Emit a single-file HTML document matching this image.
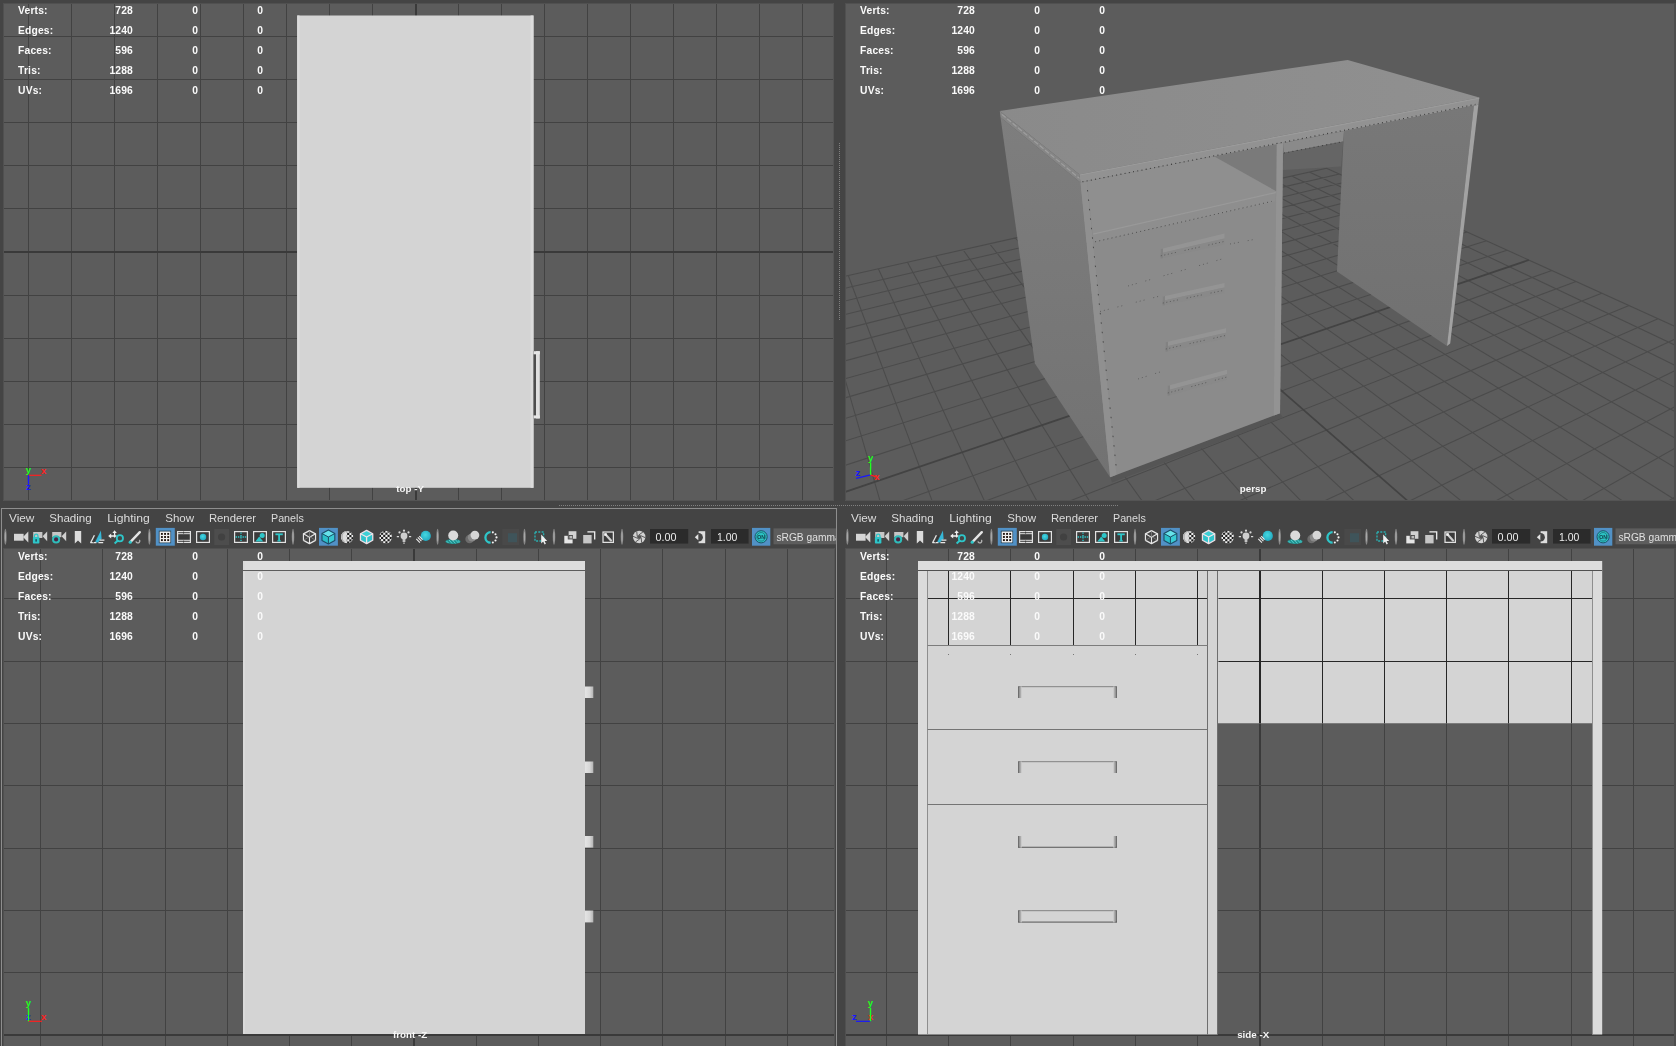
<!DOCTYPE html>
<html><head><meta charset="utf-8"><title>Maya four view</title>
<style>
html,body{margin:0;padding:0;background:#444444;}
body{width:1676px;height:1046px;overflow:hidden;position:relative;font-family:"Liberation Sans",sans-serif;}
svg{position:absolute;left:0;top:0;display:block;}
.hud{opacity:0.999;}
.hud text{font-family:"Liberation Sans",sans-serif;font-weight:bold;font-size:10.3px;letter-spacing:0.15px;fill:#fafafa;}
text.lab{font-family:"Liberation Sans",sans-serif;font-weight:bold;font-size:9.8px;fill:#f6f6f6;text-anchor:middle;opacity:0.999;}
text.menu{font-family:"Liberation Sans",sans-serif;font-size:11.6px;fill:#dcdcdc;}
text.fld{font-family:"Liberation Sans",sans-serif;font-size:11.6px;fill:#ececec;}
</style>
</head>
<body>
<svg width="1676" height="1046" viewBox="0 0 1676 1046">
<defs>
<clipPath id="cTL"><rect x="3" y="3" width="831" height="498"/></clipPath>
<clipPath id="cTR"><rect x="845" y="3" width="831" height="498"/></clipPath>
<clipPath id="cBL"><rect x="3" y="548" width="832" height="498"/></clipPath>
<clipPath id="cBR"><rect x="845" y="548" width="831" height="498"/></clipPath>
<clipPath id="cTBL"><rect x="2" y="509" width="834" height="39"/></clipPath>
<clipPath id="cTBR"><rect x="845" y="509" width="831" height="39"/></clipPath>
<clipPath id="ckAL"><circle cx="347.2" cy="537.1" r="6.2"/></clipPath>
<clipPath id="ckBL"><circle cx="385.6" cy="537.1" r="6.4"/></clipPath>
<clipPath id="ckAR"><circle cx="347.2" cy="537.1" r="6.2"/></clipPath>
<clipPath id="ckBR"><circle cx="385.6" cy="537.1" r="6.4"/></clipPath>
<linearGradient id="gHandle" x1="0" x2="1" y1="0" y2="0"><stop offset="0" stop-color="#e4e4e4"/><stop offset="0.55" stop-color="#d8d8d8"/><stop offset="1" stop-color="#b4b4b4"/></linearGradient>
<linearGradient id="gLegL" x1="0" x2="1" y1="0" y2="0"><stop offset="0" stop-color="#8c8c8c"/><stop offset="1" stop-color="#d0d0d0"/></linearGradient>
<linearGradient id="gLegR" x1="0" x2="1" y1="0" y2="0"><stop offset="0" stop-color="#d0d0d0"/><stop offset="1" stop-color="#8c8c8c"/></linearGradient>
<linearGradient id="gLside" x1="0" x2="0" y1="0" y2="1"><stop offset="0" stop-color="#7e7e7e"/><stop offset="1" stop-color="#727272"/></linearGradient>
<linearGradient id="gRleg" x1="0" x2="0" y1="0" y2="1"><stop offset="0" stop-color="#787878"/><stop offset="1" stop-color="#717171"/></linearGradient>
<linearGradient id="gTop" x1="0" x2="1" y1="0" y2="0"><stop offset="0" stop-color="#8a8a8a"/><stop offset="1" stop-color="#909090"/></linearGradient>
<radialGradient id="gCyL" cx="0.45" cy="0.4" r="0.6"><stop offset="0" stop-color="#45d8e0"/><stop offset="1" stop-color="#22a8c0"/></radialGradient>
<radialGradient id="gCyR" cx="0.45" cy="0.4" r="0.6"><stop offset="0" stop-color="#45d8e0"/><stop offset="1" stop-color="#22a8c0"/></radialGradient>
<linearGradient id="gEdgeL" x1="0" x2="1" y1="0" y2="0"><stop offset="0" stop-color="#444" stop-opacity="1"/><stop offset="1" stop-color="#444" stop-opacity="0"/></linearGradient>
<linearGradient id="gEdgeT" x1="0" x2="0" y1="0" y2="1"><stop offset="0" stop-color="#444" stop-opacity="1"/><stop offset="1" stop-color="#444" stop-opacity="0"/></linearGradient>
</defs>
<rect x="0" y="0" width="1676" height="1046" fill="#444444" />
<g clip-path="url(#cTL)"><rect x="3" y="3" width="831" height="498" fill="#5c5c5c" /><rect x="28" y="3" width="1" height="498" fill="#424242" /><rect x="71" y="3" width="1" height="498" fill="#424242" /><rect x="114" y="3" width="1" height="498" fill="#424242" /><rect x="157" y="3" width="1" height="498" fill="#424242" /><rect x="200" y="3" width="1" height="498" fill="#424242" /><rect x="243" y="3" width="1" height="498" fill="#424242" /><rect x="286" y="3" width="1" height="498" fill="#424242" /><rect x="329" y="3" width="1" height="498" fill="#424242" /><rect x="372" y="3" width="1" height="498" fill="#424242" /><rect x="415" y="3" width="2" height="498" fill="#3a3a3a" /><rect x="458" y="3" width="1" height="498" fill="#424242" /><rect x="501" y="3" width="1" height="498" fill="#424242" /><rect x="544" y="3" width="1" height="498" fill="#424242" /><rect x="587" y="3" width="1" height="498" fill="#424242" /><rect x="630" y="3" width="1" height="498" fill="#424242" /><rect x="673" y="3" width="1" height="498" fill="#424242" /><rect x="716" y="3" width="1" height="498" fill="#424242" /><rect x="759" y="3" width="1" height="498" fill="#424242" /><rect x="802" y="3" width="1" height="498" fill="#424242" /><rect x="3" y="36" width="831" height="1" fill="#424242" /><rect x="3" y="79" width="831" height="1" fill="#424242" /><rect x="3" y="122" width="831" height="1" fill="#424242" /><rect x="3" y="165" width="831" height="1" fill="#424242" /><rect x="3" y="208" width="831" height="1" fill="#424242" /><rect x="3" y="251" width="831" height="2" fill="#3a3a3a" /><rect x="3" y="295" width="831" height="1" fill="#424242" /><rect x="3" y="338" width="831" height="1" fill="#424242" /><rect x="3" y="381" width="831" height="1" fill="#424242" /><rect x="3" y="424" width="831" height="1" fill="#424242" /><rect x="3" y="467" width="831" height="1" fill="#424242" /><rect x="297.2" y="15.5" width="236.3" height="472.3" fill="#d4d4d4" /><rect x="297.2" y="15.5" width="2.3" height="472.3" fill="#dbdbdb" /><rect x="530.6" y="15.5" width="2.9" height="472.3" fill="#dcdcdc" /><rect x="533.5" y="351.2" width="2.7" height="67.2" fill="#4e4e4e" /><rect x="536" y="351.2" width="3.8" height="67.2" fill="#e0e0e0" /><rect x="533.5" y="351.2" width="6.3" height="3.1" fill="#e6e6e6" /><rect x="533.5" y="415.4" width="6.3" height="3" fill="#e6e6e6" /><g font-family='"Liberation Sans", sans-serif' font-weight="bold" font-size="9.5px"><path d="M28.5 475.3 h13" stroke="#ff2020" stroke-width="1.2"/><path d="M28.5 475.3 v9" stroke="#1818ff" stroke-width="1.4"/><text x="41" y="473.5" fill="#ff2020">x</text><text x="25.7" y="473.1" fill="#20ff20">y</text><text x="26" y="489.6" fill="#1818ff">z</text></g></g>
<g clip-path="url(#cTR)"><rect x="845" y="3" width="831" height="498" fill="#5c5c5c" /><path d="M751.92 297.14L861.43 1219.64M751.92 297.14L1326.53 168.15M785.13 289.69L959.31 1147.95M753.37 309.36L1339.53 174.05M817.23 282.48L1047.42 1083.42M754.91 322.33L1353.08 180.21M848.29 275.51L1127.16 1025.01M756.55 336.12L1367.22 186.63M878.36 268.76L1199.67 971.91M758.29 350.8L1381.98 193.33M907.48 262.22L1265.89 923.41M760.15 366.47L1397.42 200.34M935.69 255.89L1326.6 878.94M762.14 383.24L1413.58 207.68M963.05 249.75L1382.46 838.03M764.28 401.21L1430.51 215.37M989.58 243.79L1434.04 800.25M766.57 420.53L1448.26 223.43M1015.32 238.01L1481.8 765.27M769.04 441.35L1466.9 231.9M1040.31 232.4L1526.15 732.79M771.71 463.85L1486.5 240.8M1064.58 226.96L1567.46 702.53M774.61 488.25L1507.13 250.16M1111.09 216.52L1642.08 647.88M781.2 543.79L1551.83 270.46M1133.38 211.51L1675.9 623.11M784.98 575.58L1576.09 281.48M1155.06 206.65L1707.67 599.84M789.13 610.6L1601.79 293.15M1176.16 201.91L1737.58 577.93M793.73 649.35L1629.04 305.53M1196.7 197.3L1765.78 557.28M798.85 692.48L1658 318.68M1216.7 192.81L1792.41 537.77M804.58 740.77L1688.83 332.68M1236.19 188.43L1817.61 519.32M811.05 795.2L1721.71 347.61M1255.18 184.17L1841.49 501.83M818.38 857.03L1756.87 363.57M1273.69 180.01L1864.14 485.24M826.79 927.86L1794.53 380.68M1291.74 175.96L1885.66 469.48M836.52 1009.83L1834.99 399.05M1309.35 172.01L1906.13 454.49M847.91 1105.79L1878.56 418.84M1326.53 168.15L1925.62 440.21M861.43 1219.64L1925.62 440.21" stroke="#4b4b4b" stroke-width="1.05" fill="none"/><path d="M1088.16 221.66L1606.01 674.3M777.76 514.8L1528.87 260.04" stroke="#434343" stroke-width="1.7" fill="none"/><polygon points="1344,131 1473.9,105.68 1447,345.9 1337,271.6" fill="url(#gRleg)" /><polygon points="1473.9,105.68 1478.4,104.8 1450.2,343.4 1447,345.9" fill="#a2a2a2" /><polygon points="1283,142.9 1344,131 1343.2,141.5 1283.5,153" fill="#8a8a8a" /><polygon points="1283.5,153 1343.2,141.5 1341,166.5 1283,170" fill="#656565" /><polygon points="1110.1,477.2 1280,413.2 1283,417.5 1112,482.5" fill="#555555" /><polygon points="1000.5,117.2 1080.4,182.4 1110.1,477.2 1034.9,363.5" fill="url(#gLside)" /><polygon points="1080.4,182.4 1283,142.9 1280,413.2 1110.1,477.2" fill="#8b8b8b" /><polygon points="1086.8,181.15 1214,156.35 1276.8,191.5 1275.7,193 1093.1,234.6" fill="#8f8f8f" /><polygon points="1214,156.35 1276.8,144.11 1276.8,191.5" fill="#7a7a7a" /><polygon points="1276.8,144.11 1283,142.9 1280,413.2 1273.8,415.6" fill="#939393" /><polygon points="1080.4,182.4 1086.8,181.15 1116.4,474.8 1110.1,477.2" fill="#909090" /><polygon points="1093.1,234.6 1275.7,193 1275.2,201.6 1093.9,242" fill="#8e8e8e" /><path d="M1095.1 241.8L1271.7 201.4" stroke="#3a3a3a" stroke-width="1" stroke-dasharray="1 3.2" fill="none" opacity="0.75"/><path d="M1087.5 190L1116.5 470" stroke="#3a3a3a" stroke-width="1" stroke-dasharray="1.5 8" fill="none" opacity="0.8"/><path d="M1093.1 234.2L1275.7 192.6" stroke="#999999" stroke-width="1.2" fill="none"/><polygon points="1160.8,249 1224.5,233.5 1224.5,238.45 1160.8,253.28" fill="#949494" /><polygon points="1160.8,253.28 1224.5,238.45 1224.5,244.5 1160.8,258.5" fill="#898989" /><polygon points="1160.8,249 1163,248.5 1163,258 1160.8,258.5" fill="#828282" /><path d="M1160.8 255.84L1224.5 241.42" stroke="#333" stroke-width="1" stroke-dasharray="1 2.6 1 2.6 1 2.6 1 2.6 1 9" fill="none" opacity="0.55"/><polygon points="1162.8,296.6 1224.5,283 1224.5,287.5 1162.8,300.65" fill="#949494" /><polygon points="1162.8,300.65 1224.5,287.5 1224.5,293 1162.8,305.6" fill="#898989" /><polygon points="1162.8,296.6 1165,296.1 1165,305.1 1162.8,305.6" fill="#828282" /><path d="M1162.8 303.08L1224.5 290.2" stroke="#333" stroke-width="1" stroke-dasharray="1 2.6 1 2.6 1 2.6 1 2.6 1 9" fill="none" opacity="0.55"/><polygon points="1165.8,342.2 1226,328.2 1226,332.7 1165.8,346.47" fill="#949494" /><polygon points="1165.8,346.47 1226,332.7 1226,338.2 1165.8,351.7" fill="#898989" /><polygon points="1165.8,342.2 1168,341.7 1168,351.2 1165.8,351.7" fill="#828282" /><path d="M1165.8 349.04L1226 335.4" stroke="#333" stroke-width="1" stroke-dasharray="1 2.6 1 2.6 1 2.6 1 2.6 1 9" fill="none" opacity="0.55"/><polygon points="1167.8,385.8 1227,369.7 1227,374.25 1167.8,390.3" fill="#949494" /><polygon points="1167.8,390.3 1227,374.25 1227,379.8 1167.8,395.8" fill="#898989" /><polygon points="1167.8,385.8 1170,385.3 1170,395.3 1167.8,395.8" fill="#828282" /><path d="M1167.8 393L1227 376.97" stroke="#333" stroke-width="1" stroke-dasharray="1 2.6 1 2.6 1 2.6 1 2.6 1 9" fill="none" opacity="0.55"/><path d="M1128 286L1222 259" stroke="#3a3a3a" stroke-width="1" stroke-dasharray="1 3 1 3 1 9 1 3 1 14" fill="none" opacity="0.55"/><path d="M1100 311.5L1160 296" stroke="#3a3a3a" stroke-width="1" stroke-dasharray="1 3 1 3 1 9 1 3 1 14" fill="none" opacity="0.55"/><path d="M1138 379L1160 372" stroke="#3a3a3a" stroke-width="1" stroke-dasharray="1 3 1 3 1 9 1 3 1 14" fill="none" opacity="0.55"/><path d="M1230 244L1262 238" stroke="#3a3a3a" stroke-width="1" stroke-dasharray="1 3 1 3 1 9 1 3 1 14" fill="none" opacity="0.55"/><polygon points="999.8,110.9 1347.7,60 1479.3,97.6 1079.5,174.4" fill="url(#gTop)" /><polygon points="1079.5,174.4 1479.3,97.6 1478.4,104.8 1080.4,182.4" fill="#929292" /><polygon points="999.8,110.9 1079.5,174.4 1080.4,182.4 1000.5,117.2" fill="#868686" /><path d="M1082.4 181.8L1475.4 104.4" stroke="#2c2c2c" stroke-width="1.1" stroke-dasharray="1 3.3" fill="none" opacity="0.85"/><path d="M1284 153L1343 141.6" stroke="#2c2c2c" stroke-width="1.1" stroke-dasharray="1 3.3" fill="none" opacity="0.7"/><path d="M1001.8 114.4L1079.5 178.4" stroke="#a4a4a4" stroke-width="1.2" stroke-dasharray="5 2" fill="none" opacity="0.8"/><path d="M1079.5 175L1479.3 98.2" stroke="#9d9d9d" stroke-width="1.2" fill="none" opacity="0.8"/><g font-family='"Liberation Sans", sans-serif' font-weight="bold" font-size="9.5px"><path d="M870.6 474.9 l-14.5 3.5" stroke="#1818ff" stroke-width="1.3"/><path d="M870.6 474.9 l6 2.2" stroke="#ff2020" stroke-width="1.3"/><path d="M870.6 474.9 v-12.2" stroke="#20ff20" stroke-width="1.4"/><text x="874.2" y="479.7" fill="#ff2020">x</text><text x="855.6" y="476.3" fill="#1818ff">z</text><text x="867.9" y="461.3" fill="#20ff20">y</text></g></g>
<g clip-path="url(#cBL)"><rect x="3" y="548" width="832" height="498" fill="#5c5c5c" /><rect x="40" y="548" width="1" height="498" fill="#424242" /><rect x="102" y="548" width="1" height="498" fill="#424242" /><rect x="165" y="548" width="1" height="498" fill="#424242" /><rect x="227" y="548" width="1" height="498" fill="#424242" /><rect x="289" y="548" width="1" height="498" fill="#424242" /><rect x="351" y="548" width="1" height="498" fill="#424242" /><rect x="413" y="548" width="2" height="498" fill="#3a3a3a" /><rect x="476" y="548" width="1" height="498" fill="#424242" /><rect x="538" y="548" width="1" height="498" fill="#424242" /><rect x="600" y="548" width="1" height="498" fill="#424242" /><rect x="662" y="548" width="1" height="498" fill="#424242" /><rect x="725" y="548" width="1" height="498" fill="#424242" /><rect x="787" y="548" width="1" height="498" fill="#424242" /><rect x="3" y="598" width="832" height="1" fill="#424242" /><rect x="3" y="661" width="832" height="1" fill="#424242" /><rect x="3" y="723" width="832" height="1" fill="#424242" /><rect x="3" y="785" width="832" height="1" fill="#424242" /><rect x="3" y="848" width="832" height="1" fill="#424242" /><rect x="3" y="910" width="832" height="1" fill="#424242" /><rect x="3" y="972" width="832" height="1" fill="#424242" /><rect x="3" y="1034" width="832" height="2" fill="#3a3a3a" /><rect x="243" y="561" width="342" height="473" fill="#d4d4d4" /><rect x="243" y="561" width="342" height="9" fill="#dddddd" /><rect x="243" y="561" width="2" height="473" fill="#dadada" /><rect x="243" y="570" width="342" height="1" fill="#5c5c5c" /><rect x="585" y="686.5" width="8.3" height="11.5" fill="url(#gHandle)" /><rect x="585" y="761.5" width="8.3" height="11.5" fill="url(#gHandle)" /><rect x="585" y="836" width="8.3" height="11.6" fill="url(#gHandle)" /><rect x="585" y="910.5" width="8.3" height="11.9" fill="url(#gHandle)" /><g font-family='"Liberation Sans", sans-serif' font-weight="bold" font-size="9.5px"><text x="25.9" y="1020.3" fill="#1818ff">z</text><path d="M28.5 1021.3 h13.5" stroke="#ff2020" stroke-width="1.2"/><path d="M28.5 1021.3 v-13.5" stroke="#20ff20" stroke-width="1.4"/><text x="41" y="1020.1" fill="#ff2020">x</text><text x="25.7" y="1006" fill="#20ff20">y</text></g></g>
<g clip-path="url(#cBR)"><rect x="845" y="548" width="831" height="498" fill="#5c5c5c" /><rect x="886" y="548" width="1" height="498" fill="#424242" /><rect x="948" y="548" width="1" height="498" fill="#424242" /><rect x="1010" y="548" width="1" height="498" fill="#424242" /><rect x="1073" y="548" width="1" height="498" fill="#424242" /><rect x="1135" y="548" width="1" height="498" fill="#424242" /><rect x="1197" y="548" width="1" height="498" fill="#424242" /><rect x="1259" y="548" width="2" height="498" fill="#3a3a3a" /><rect x="1322" y="548" width="1" height="498" fill="#424242" /><rect x="1384" y="548" width="1" height="498" fill="#424242" /><rect x="1446" y="548" width="1" height="498" fill="#424242" /><rect x="1508" y="548" width="1" height="498" fill="#424242" /><rect x="1571" y="548" width="1" height="498" fill="#424242" /><rect x="1633" y="548" width="1" height="498" fill="#424242" /><rect x="845" y="598" width="831" height="1" fill="#424242" /><rect x="845" y="661" width="831" height="1" fill="#424242" /><rect x="845" y="723" width="831" height="1" fill="#424242" /><rect x="845" y="785" width="831" height="1" fill="#424242" /><rect x="845" y="848" width="831" height="1" fill="#424242" /><rect x="845" y="910" width="831" height="1" fill="#424242" /><rect x="845" y="972" width="831" height="1" fill="#424242" /><rect x="845" y="1034" width="831" height="2" fill="#3a3a3a" /><rect x="918" y="561" width="684.2" height="9.4" fill="#dddddd" /><rect x="918" y="570" width="9.6" height="464.5" fill="#dbdbdb" /><rect x="1592.3" y="570" width="9.9" height="464.5" fill="#dbdbdb" /><rect x="927.6" y="570" width="290" height="464.5" fill="#d4d4d4" /><rect x="1217.6" y="570" width="374.7" height="153.4" fill="#d4d4d4" /><rect x="948" y="571" width="1" height="74.5" fill="#262626" /><rect x="1010" y="571" width="1" height="74.5" fill="#262626" /><rect x="1073" y="571" width="1" height="74.5" fill="#262626" /><rect x="1135" y="571" width="1" height="74.5" fill="#262626" /><rect x="1197" y="571" width="1" height="74.5" fill="#262626" /><rect x="1259" y="571" width="2" height="152.4" fill="#262626" /><rect x="1322" y="571" width="1" height="152.4" fill="#262626" /><rect x="1384" y="571" width="1" height="152.4" fill="#262626" /><rect x="1446" y="571" width="1" height="152.4" fill="#262626" /><rect x="1508" y="571" width="1" height="152.4" fill="#262626" /><rect x="1571" y="571" width="1" height="152.4" fill="#262626" /><rect x="927.6" y="598" width="279.9" height="1" fill="#262626" /><rect x="1218.4" y="598" width="373.9" height="1" fill="#262626" /><rect x="1218.4" y="661" width="373.9" height="1" fill="#262626" /><rect x="918" y="570" width="684.2" height="1" fill="#505050" /><rect x="927" y="571" width="1" height="463.5" fill="#8e8e8e" /><rect x="1592" y="571" width="1" height="463.5" fill="#8e8e8e" /><rect x="1207" y="571" width="1" height="463.5" fill="#6e6e6e" /><rect x="1217" y="571" width="1" height="463.5" fill="#6e6e6e" /><rect x="927.6" y="645" width="279.9" height="1" fill="#7c7c7c" /><rect x="927.6" y="729" width="279.9" height="1" fill="#747474" /><rect x="927.6" y="804" width="279.9" height="1" fill="#747474" /><rect x="948" y="654" width="1" height="1" fill="#777777" /><rect x="1010" y="654" width="1" height="1" fill="#777777" /><rect x="1073" y="654" width="1" height="1" fill="#777777" /><rect x="1135" y="654" width="1" height="1" fill="#777777" /><rect x="1197" y="654" width="1" height="1" fill="#777777" /><rect x="1018.2" y="686.1" width="98.6" height="1.1" fill="#8a8a8a" /><rect x="1018.2" y="686.5" width="1.2" height="11.5" fill="#555555" /><rect x="1019.4" y="686.5" width="2.4" height="11.5" fill="url(#gLegL)" /><rect x="1115.6" y="686.5" width="1.2" height="11.5" fill="#555555" /><rect x="1113.2" y="686.5" width="2.4" height="11.5" fill="url(#gLegR)" /><rect x="1018.2" y="761.1" width="98.6" height="1.1" fill="#8a8a8a" /><rect x="1018.2" y="761.5" width="1.2" height="11.5" fill="#555555" /><rect x="1019.4" y="761.5" width="2.4" height="11.5" fill="url(#gLegL)" /><rect x="1115.6" y="761.5" width="1.2" height="11.5" fill="#555555" /><rect x="1113.2" y="761.5" width="2.4" height="11.5" fill="url(#gLegR)" /><rect x="1018.2" y="846.7" width="98.6" height="1.2" fill="#6a6a6a" /><rect x="1018.2" y="836" width="1.2" height="11.6" fill="#555555" /><rect x="1019.4" y="836" width="2.4" height="11.6" fill="url(#gLegL)" /><rect x="1115.6" y="836" width="1.2" height="11.6" fill="#555555" /><rect x="1113.2" y="836" width="2.4" height="11.6" fill="url(#gLegR)" /><rect x="1018.2" y="910.1" width="98.6" height="1.1" fill="#8a8a8a" /><rect x="1018.2" y="921.5" width="98.6" height="1.2" fill="#6a6a6a" /><rect x="1018.2" y="910.5" width="1.2" height="11.9" fill="#555555" /><rect x="1019.4" y="910.5" width="2.4" height="11.9" fill="url(#gLegL)" /><rect x="1115.6" y="910.5" width="1.2" height="11.9" fill="#555555" /><rect x="1113.2" y="910.5" width="2.4" height="11.9" fill="url(#gLegR)" /><g font-family='"Liberation Sans", sans-serif' font-weight="bold" font-size="9.5px"><text x="867.9" y="1020.3" fill="#ff2020">x</text><path d="M870.5 1021.3 h-14.5" stroke="#1818ff" stroke-width="1.2"/><path d="M870.5 1021.3 v-13.5" stroke="#20ff20" stroke-width="1.4"/><text x="852" y="1020.3" fill="#1818ff">z</text><text x="867.7" y="1006" fill="#20ff20">y</text></g></g>
<g style="filter:grayscale(1)">
<g class="hud"><text x="18.1" y="14.2">Verts:</text><text x="133" y="14.2" text-anchor="end">728</text><text x="198.2" y="14.2" text-anchor="end">0</text><text x="263.2" y="14.2" text-anchor="end">0</text><text x="18.1" y="34.25">Edges:</text><text x="133" y="34.25" text-anchor="end">1240</text><text x="198.2" y="34.25" text-anchor="end">0</text><text x="263.2" y="34.25" text-anchor="end">0</text><text x="18.1" y="54.3">Faces:</text><text x="133" y="54.3" text-anchor="end">596</text><text x="198.2" y="54.3" text-anchor="end">0</text><text x="263.2" y="54.3" text-anchor="end">0</text><text x="18.1" y="74.35">Tris:</text><text x="133" y="74.35" text-anchor="end">1288</text><text x="198.2" y="74.35" text-anchor="end">0</text><text x="263.2" y="74.35" text-anchor="end">0</text><text x="18.1" y="94.4">UVs:</text><text x="133" y="94.4" text-anchor="end">1696</text><text x="198.2" y="94.4" text-anchor="end">0</text><text x="263.2" y="94.4" text-anchor="end">0</text></g>
<g class="hud"><text x="860.1" y="14.2">Verts:</text><text x="975" y="14.2" text-anchor="end">728</text><text x="1040.2" y="14.2" text-anchor="end">0</text><text x="1105.2" y="14.2" text-anchor="end">0</text><text x="860.1" y="34.25">Edges:</text><text x="975" y="34.25" text-anchor="end">1240</text><text x="1040.2" y="34.25" text-anchor="end">0</text><text x="1105.2" y="34.25" text-anchor="end">0</text><text x="860.1" y="54.3">Faces:</text><text x="975" y="54.3" text-anchor="end">596</text><text x="1040.2" y="54.3" text-anchor="end">0</text><text x="1105.2" y="54.3" text-anchor="end">0</text><text x="860.1" y="74.35">Tris:</text><text x="975" y="74.35" text-anchor="end">1288</text><text x="1040.2" y="74.35" text-anchor="end">0</text><text x="1105.2" y="74.35" text-anchor="end">0</text><text x="860.1" y="94.4">UVs:</text><text x="975" y="94.4" text-anchor="end">1696</text><text x="1040.2" y="94.4" text-anchor="end">0</text><text x="1105.2" y="94.4" text-anchor="end">0</text></g>
<g clip-path="url(#cBL)"><g class="hud"><text x="18.1" y="560.2">Verts:</text><text x="133" y="560.2" text-anchor="end">728</text><text x="198.2" y="560.2" text-anchor="end">0</text><text x="263.2" y="560.2" text-anchor="end">0</text><text x="18.1" y="580.25">Edges:</text><text x="133" y="580.25" text-anchor="end">1240</text><text x="198.2" y="580.25" text-anchor="end">0</text><text x="263.2" y="580.25" text-anchor="end">0</text><text x="18.1" y="600.3">Faces:</text><text x="133" y="600.3" text-anchor="end">596</text><text x="198.2" y="600.3" text-anchor="end">0</text><text x="263.2" y="600.3" text-anchor="end">0</text><text x="18.1" y="620.35">Tris:</text><text x="133" y="620.35" text-anchor="end">1288</text><text x="198.2" y="620.35" text-anchor="end">0</text><text x="263.2" y="620.35" text-anchor="end">0</text><text x="18.1" y="640.4">UVs:</text><text x="133" y="640.4" text-anchor="end">1696</text><text x="198.2" y="640.4" text-anchor="end">0</text><text x="263.2" y="640.4" text-anchor="end">0</text></g></g>
<g clip-path="url(#cBR)"><g class="hud"><text x="860.1" y="560.2">Verts:</text><text x="975" y="560.2" text-anchor="end">728</text><text x="1040.2" y="560.2" text-anchor="end">0</text><text x="1105.2" y="560.2" text-anchor="end">0</text><text x="860.1" y="580.25">Edges:</text><text x="975" y="580.25" text-anchor="end">1240</text><text x="1040.2" y="580.25" text-anchor="end">0</text><text x="1105.2" y="580.25" text-anchor="end">0</text><text x="860.1" y="600.3">Faces:</text><text x="975" y="600.3" text-anchor="end">596</text><text x="1040.2" y="600.3" text-anchor="end">0</text><text x="1105.2" y="600.3" text-anchor="end">0</text><text x="860.1" y="620.35">Tris:</text><text x="975" y="620.35" text-anchor="end">1288</text><text x="1040.2" y="620.35" text-anchor="end">0</text><text x="1105.2" y="620.35" text-anchor="end">0</text><text x="860.1" y="640.4">UVs:</text><text x="975" y="640.4" text-anchor="end">1696</text><text x="1040.2" y="640.4" text-anchor="end">0</text><text x="1105.2" y="640.4" text-anchor="end">0</text></g></g>
<text class="lab" x="410.2" y="491.9">top -Y</text>
<text class="lab" x="1253.2" y="491.9">persp</text>
<text class="lab" x="410.2" y="1037.8">front -Z</text>
<text class="lab" x="1253.2" y="1037.8">side -X</text>
</g>
<rect x="3" y="3" width="1" height="498" fill="#505050" />
<rect x="3" y="3" width="831" height="1" fill="#505050" />
<rect x="3" y="500" width="831" height="1" fill="#545454" />
<rect x="833" y="3" width="1" height="498" fill="#545454" />
<rect x="845" y="3" width="1" height="498" fill="#505050" />
<rect x="845" y="3" width="831" height="1" fill="#505050" />
<rect x="845" y="500" width="831" height="1" fill="#545454" />
<rect x="3" y="548" width="1" height="498" fill="#505050" />
<rect x="3" y="548" width="832" height="1" fill="#505050" />
<rect x="834" y="548" width="1" height="498" fill="#545454" />
<rect x="845" y="548" width="1" height="498" fill="#505050" />
<rect x="845" y="548" width="831" height="1" fill="#505050" />
<rect x="1674" y="3" width="2" height="498" fill="#4e4e4e" />
<rect x="1674" y="548" width="2" height="498" fill="#4e4e4e" />
<path d="M559 505.5 H1119" stroke="#808080" stroke-width="1" stroke-dasharray="1 1" shape-rendering="crispEdges"/>
<path d="M839.5 143 V321" stroke="#808080" stroke-width="1" stroke-dasharray="1 1" shape-rendering="crispEdges"/>
<rect x="1" y="508" width="836" height="1" fill="#8e8e8e" />
<rect x="1" y="508" width="1" height="538" fill="#8e8e8e" />
<rect x="836" y="508" width="1" height="538" fill="#8e8e8e" />
<g clip-path="url(#cTBL)"><text class="menu" x="9" y="522.2" textLength="25.4" lengthAdjust="spacingAndGlyphs">View</text><text class="menu" x="49.2" y="522.2" textLength="42.6" lengthAdjust="spacingAndGlyphs">Shading</text><text class="menu" x="107.2" y="522.2" textLength="42.6" lengthAdjust="spacingAndGlyphs">Lighting</text><text class="menu" x="165.2" y="522.2" textLength="29" lengthAdjust="spacingAndGlyphs">Show</text><text class="menu" x="208.9" y="522.2" textLength="47.2" lengthAdjust="spacingAndGlyphs">Renderer</text><text class="menu" x="271" y="522.2" textLength="32.8" lengthAdjust="spacingAndGlyphs">Panels</text><g transform="translate(0,0)"><ellipse cx="5.4" cy="536.8" rx="1.25" ry="8" fill="#878787"/><ellipse cx="5.4" cy="536.8" rx="0.6" ry="5" fill="#a8a8a8"/><ellipse cx="149.4" cy="536.8" rx="1.25" ry="8" fill="#878787"/><ellipse cx="149.4" cy="536.8" rx="0.6" ry="5" fill="#a8a8a8"/><ellipse cx="293" cy="536.8" rx="1.25" ry="8" fill="#878787"/><ellipse cx="293" cy="536.8" rx="0.6" ry="5" fill="#a8a8a8"/><ellipse cx="437.6" cy="536.8" rx="1.25" ry="8" fill="#878787"/><ellipse cx="437.6" cy="536.8" rx="0.6" ry="5" fill="#a8a8a8"/><ellipse cx="524.5" cy="536.8" rx="1.25" ry="8" fill="#878787"/><ellipse cx="524.5" cy="536.8" rx="0.6" ry="5" fill="#a8a8a8"/><ellipse cx="554" cy="536.8" rx="1.25" ry="8" fill="#878787"/><ellipse cx="554" cy="536.8" rx="0.6" ry="5" fill="#a8a8a8"/><ellipse cx="622" cy="536.8" rx="1.25" ry="8" fill="#878787"/><ellipse cx="622" cy="536.8" rx="0.6" ry="5" fill="#a8a8a8"/><rect x="14" y="533.8" width="9.6" height="6.9" fill="#d6d6d6" /><polygon points="28.3,531.6 28.3,542.4 23,537.1" fill="#d6d6d6" /><rect x="33.2" y="532" width="9.2" height="6" fill="#c6c6c6" /><polygon points="47.2,531.4 47.2,541.2 42.6,536.3" fill="#d0d0d0" /><rect x="32.9" y="536.9" width="6.5" height="6.7" fill="#2ec6c9" rx="0.8"/><path d="M34.4 537.2 v-1.2 a1.8 1.8 0 0 1 3.6 0 v1.2" fill="none" stroke="#2ec6c9" stroke-width="1.3"/><rect x="35.3" y="539.2" width="1.7" height="2.4" fill="#1d5a66" /><rect x="52.2" y="532" width="9.2" height="5.2" fill="#c6c6c6" /><polygon points="66.2,531.4 66.2,541.2 61.6,536.3" fill="#d0d0d0" /><circle cx="56.1" cy="539.4" r="3.1" fill="#4a2444" stroke="#2fbcb9" stroke-width="2"/><polygon points="74.8,531 81.2,531 81.2,543.6 78,540.4 74.8,543.6" fill="#dcdcdc" /><polygon points="95,542.6 100.9,530.6 101.6,538.6 98,542.6" fill="#36b8d8" /><path d="M90.6 542.8 L94.4 535.2" stroke="#e6e6e6" stroke-width="1.3"/><path d="M90.4 542.6 h6 M99.6 540.2 h4.8 M98.4 542.6 h4.8" stroke="#e6e6e6" stroke-width="1.2"/><path d="M93.2 542.6 L96.6 535.6" stroke="#303030" stroke-width="1"/><path d="M110 536 h6.5 M114.6 532 v5.6" stroke="#f0f0f0" stroke-width="1.3" fill="none"/><polygon points="108.2,536 111.2,533.6 111.2,538.4" fill="#f0f0f0" /><polygon points="114.6,530.3 112.4,533.1 116.8,533.1" fill="#f0f0f0" /><circle cx="119.9" cy="538.3" r="3.1" fill="none" stroke="#2ec6c9" stroke-width="1.8"/><path d="M117.6 540.8 L114.6 543.6" stroke="#2ec6c9" stroke-width="2"/><path d="M131 541.4 L139.8 532.2" stroke="#e4e4e4" stroke-width="2.4" stroke-linecap="round"/><circle cx="130.2" cy="542.2" r="1.6" fill="#2ec6c9"/><path d="M136 541.3 a1.9 1.9 0 1 0 3.4 -1.4" fill="none" stroke="#b4b4b4" stroke-width="1.3"/><rect x="155.8" y="527.9" width="19" height="17.8" fill="#5191c6" /><rect x="158.8" y="530.7" width="12.3" height="12.5" fill="#1f3a4d" /><rect x="159.6" y="531.5" width="10.8" height="11" fill="#f2f2f2" /><rect x="160.95" y="532.95" width="1.9" height="1.9" fill="#20140f" /><rect x="160.95" y="536.05" width="1.9" height="1.9" fill="#20140f" /><rect x="160.95" y="539.15" width="1.9" height="1.9" fill="#20140f" /><rect x="164.1" y="532.95" width="1.9" height="1.9" fill="#20140f" /><rect x="164.1" y="536.05" width="1.9" height="1.9" fill="#20140f" /><rect x="164.1" y="539.15" width="1.9" height="1.9" fill="#20140f" /><rect x="167.25" y="532.95" width="1.9" height="1.9" fill="#20140f" /><rect x="167.25" y="536.05" width="1.9" height="1.9" fill="#20140f" /><rect x="167.25" y="539.15" width="1.9" height="1.9" fill="#20140f" /><rect x="177.6" y="531.6" width="12.8" height="10.8" fill="#3b3b3b" stroke="#e2e2e2" stroke-width="1.2"/><path d="M177.6 533.7 h12.8 M177.6 540.3 h12.8" stroke="#e2e2e2" stroke-width="1"/><path d="M183.6 531.6 v2 M183.6 540.6 v2" stroke="#3b3b3b" stroke-width="0.9"/><rect x="196.6" y="531.6" width="12.8" height="10.8" fill="#3b3b3b" stroke="#e2e2e2" stroke-width="1.2"/><circle cx="203" cy="537" r="3.2" fill="url(#gCyL)"/><rect x="214.2" y="529" width="14.8" height="16" fill="#4d4d4d" /><circle cx="221.6" cy="537" r="3.6" fill="#414141"/><rect x="234.6" y="531.6" width="12.8" height="10.8" fill="#3b3b3b" stroke="#e2e2e2" stroke-width="1.2"/><path d="M235.6 537 h11" stroke="#2ec6c9" stroke-width="1.4" stroke-dasharray="1.4 0.9"/><path d="M241 532.6 v9" stroke="#2ec6c9" stroke-width="1.4" stroke-dasharray="1.2 1.2"/><rect x="253.6" y="531.6" width="12.8" height="10.8" fill="#3b3b3b" stroke="#e2e2e2" stroke-width="1.2"/><circle cx="262.2" cy="535.4" r="2.5" fill="#2ec6c9"/><polygon points="255.4,541.6 259.2,536.4 263.2,541.6" fill="#2ec6c9" /><rect x="272.6" y="531.6" width="12.8" height="10.8" fill="#3b3b3b" stroke="#e2e2e2" stroke-width="1.2"/><rect x="275.4" y="533.4" width="7.4" height="1.8" fill="#2ec6c9" /><rect x="278.2" y="535" width="1.8" height="6.2" fill="#2ec6c9" /><rect x="277.2" y="540.4" width="3.8" height="1" fill="#2ec6c9" /><polygon points="309.5,530.6 315.55,533.85 315.55,540.35 309.5,543.6 303.45,540.35 303.45,533.85" fill="none" stroke="#e6e6e6" stroke-width="1.2" stroke-linejoin="round"/><path d="M309.5 543.8 V537.2 L303.45 533.85 M309.5 537.2 L315.55 533.85" stroke="#e6e6e6" stroke-width="1.1" fill="none"/><path d="M309.5 530.6 v6 L303.45 540.35 M309.5 536.4 L315.55 540.35" stroke="#8a8a8a" stroke-width="0.7" fill="none"/><rect x="319" y="527.9" width="18.9" height="17.8" fill="#5191c6" /><polygon points="328.4,530.1 334.82,533.55 328.4,537 321.98,533.55" fill="#66e2ea" /><polygon points="321.98,533.55 328.4,537 328.4,543.9 321.98,540.45" fill="#2bbfc8" /><polygon points="328.4,537 334.82,533.55 334.82,540.45 328.4,543.9" fill="#38cbd3" /><polygon points="328.4,530.1 334.82,533.55 334.82,540.45 328.4,543.9 321.98,540.45 321.98,533.55" fill="none" stroke="#1d4d66" stroke-width="1.1" stroke-linejoin="round"/><path d="M328.4 537 V543.9 M328.4 537 L321.98 533.55 M328.4 537 L334.82 533.55" stroke="#1d4d66" stroke-width="1" fill="none"/><g clip-path="url(#ckAL)"><rect x="341" y="530.9" width="12.4" height="12.4" fill="#f0f0f0" /><rect x="340.7" y="530.7" width="2.15" height="2.15" fill="#1c1c1c" /><rect x="340.7" y="535" width="2.15" height="2.15" fill="#1c1c1c" /><rect x="340.7" y="539.3" width="2.15" height="2.15" fill="#1c1c1c" /><rect x="340.7" y="543.6" width="2.15" height="2.15" fill="#1c1c1c" /><rect x="342.85" y="532.85" width="2.15" height="2.15" fill="#1c1c1c" /><rect x="342.85" y="537.15" width="2.15" height="2.15" fill="#1c1c1c" /><rect x="342.85" y="541.45" width="2.15" height="2.15" fill="#1c1c1c" /><rect x="345" y="530.7" width="2.15" height="2.15" fill="#1c1c1c" /><rect x="345" y="535" width="2.15" height="2.15" fill="#1c1c1c" /><rect x="345" y="539.3" width="2.15" height="2.15" fill="#1c1c1c" /><rect x="345" y="543.6" width="2.15" height="2.15" fill="#1c1c1c" /><rect x="347.15" y="532.85" width="2.15" height="2.15" fill="#1c1c1c" /><rect x="347.15" y="537.15" width="2.15" height="2.15" fill="#1c1c1c" /><rect x="347.15" y="541.45" width="2.15" height="2.15" fill="#1c1c1c" /><rect x="349.3" y="530.7" width="2.15" height="2.15" fill="#1c1c1c" /><rect x="349.3" y="535" width="2.15" height="2.15" fill="#1c1c1c" /><rect x="349.3" y="539.3" width="2.15" height="2.15" fill="#1c1c1c" /><rect x="349.3" y="543.6" width="2.15" height="2.15" fill="#1c1c1c" /><rect x="351.45" y="532.85" width="2.15" height="2.15" fill="#1c1c1c" /><rect x="351.45" y="537.15" width="2.15" height="2.15" fill="#1c1c1c" /><rect x="351.45" y="541.45" width="2.15" height="2.15" fill="#1c1c1c" /><rect x="353.6" y="530.7" width="2.15" height="2.15" fill="#1c1c1c" /><rect x="353.6" y="535" width="2.15" height="2.15" fill="#1c1c1c" /><rect x="353.6" y="539.3" width="2.15" height="2.15" fill="#1c1c1c" /><rect x="353.6" y="543.6" width="2.15" height="2.15" fill="#1c1c1c" /><path d="M346.8 529.9 V544.3 H340 V529.9 z" fill="#dcdcdc"/><path d="M344.6 532.3 a2.6 4.8 0 0 0 0 9.6" fill="none" stroke="#b0b0b0" stroke-width="1.4"/></g><polygon points="366.6,530.4 372.74,533.7 372.74,540.3 366.6,543.6 360.46,540.3 360.46,533.7" fill="#30c4cc" /><polygon points="366.6,530.4 372.74,533.7 366.6,537 360.46,533.7" fill="#3ccfd6" /><polygon points="366.6,530.4 372.74,533.7 372.74,540.3 366.6,543.6 360.46,540.3 360.46,533.7" fill="none" stroke="#ecdfe6" stroke-width="1.3" stroke-linejoin="round"/><path d="M366.6 537 V543.6 M366.6 537 L360.46 533.7 M366.6 537 L372.74 533.7" stroke="#f0e6ea" stroke-width="1.3" fill="none"/><g clip-path="url(#ckBL)"><rect x="379.2" y="530.7" width="12.8" height="12.8" fill="#f0f0f0" /><rect x="378.9" y="530.5" width="2.15" height="2.15" fill="#1c1c1c" /><rect x="378.9" y="534.8" width="2.15" height="2.15" fill="#1c1c1c" /><rect x="378.9" y="539.1" width="2.15" height="2.15" fill="#1c1c1c" /><rect x="378.9" y="543.4" width="2.15" height="2.15" fill="#1c1c1c" /><rect x="381.05" y="532.65" width="2.15" height="2.15" fill="#1c1c1c" /><rect x="381.05" y="536.95" width="2.15" height="2.15" fill="#1c1c1c" /><rect x="381.05" y="541.25" width="2.15" height="2.15" fill="#1c1c1c" /><rect x="383.2" y="530.5" width="2.15" height="2.15" fill="#1c1c1c" /><rect x="383.2" y="534.8" width="2.15" height="2.15" fill="#1c1c1c" /><rect x="383.2" y="539.1" width="2.15" height="2.15" fill="#1c1c1c" /><rect x="383.2" y="543.4" width="2.15" height="2.15" fill="#1c1c1c" /><rect x="385.35" y="532.65" width="2.15" height="2.15" fill="#1c1c1c" /><rect x="385.35" y="536.95" width="2.15" height="2.15" fill="#1c1c1c" /><rect x="385.35" y="541.25" width="2.15" height="2.15" fill="#1c1c1c" /><rect x="387.5" y="530.5" width="2.15" height="2.15" fill="#1c1c1c" /><rect x="387.5" y="534.8" width="2.15" height="2.15" fill="#1c1c1c" /><rect x="387.5" y="539.1" width="2.15" height="2.15" fill="#1c1c1c" /><rect x="387.5" y="543.4" width="2.15" height="2.15" fill="#1c1c1c" /><rect x="389.65" y="532.65" width="2.15" height="2.15" fill="#1c1c1c" /><rect x="389.65" y="536.95" width="2.15" height="2.15" fill="#1c1c1c" /><rect x="389.65" y="541.25" width="2.15" height="2.15" fill="#1c1c1c" /><rect x="391.8" y="530.5" width="2.15" height="2.15" fill="#1c1c1c" /><rect x="391.8" y="534.8" width="2.15" height="2.15" fill="#1c1c1c" /><rect x="391.8" y="539.1" width="2.15" height="2.15" fill="#1c1c1c" /><rect x="391.8" y="543.4" width="2.15" height="2.15" fill="#1c1c1c" /></g><circle cx="404" cy="536" r="3.4" fill="#cdcdcd"/><rect x="402.6" y="539" width="2.8" height="3" fill="#c4c4c4" /><rect x="403.1" y="542.5" width="1.8" height="1.3" fill="#b0b0b0" /><circle cx="404" cy="530.7" r="1.1" fill="#d8d8d8"/><circle cx="399.5" cy="532.4" r="1.1" fill="#d8d8d8"/><circle cx="408.5" cy="532.4" r="1.1" fill="#d8d8d8"/><path d="M396.8 536.7 h2.2 M409 536.7 h2.2" stroke="#d8d8d8" stroke-width="1.3"/><circle cx="425.8" cy="535.9" r="5.1" fill="url(#gCyL)"/><path d="M416.3 538.8 l3.6 3.8 M417.8 537.4 l3.6 3.8 M419.3 536.2 l3.2 3.4" stroke="#ececec" stroke-width="1.1"/><ellipse cx="453" cy="541.4" rx="7.6" ry="2.5" fill="#22908f"/><path d="M446.5 541 l2 2 M449 540 l3 3.4 M452 539.6 l3.4 3.8 M455.4 539.8 l3 3.2 M458 540.6 l1.8 1.6" stroke="#56d8d6" stroke-width="0.9"/><circle cx="453.2" cy="535.5" r="5" fill="#dadada"/><circle cx="469.6" cy="539" r="4.3" fill="#6c6c6c"/><circle cx="472" cy="537.4" r="4.2" fill="#8a8a8a"/><circle cx="474.9" cy="535.1" r="4.4" fill="#d6d6d6"/><path d="M490.6 532.2 a5.2 5.2 0 0 0 0 10.4" fill="none" stroke="#2ec6c9" stroke-width="2.3"/><circle cx="492.84" cy="532.36" r="1.05" fill="#f4f4f4"/><circle cx="495.49" cy="534.28" r="1.05" fill="#f4f4f4"/><circle cx="496.5" cy="537.4" r="1.05" fill="#f4f4f4"/><circle cx="495.49" cy="540.52" r="1.05" fill="#f4f4f4"/><circle cx="492.84" cy="542.44" r="1.05" fill="#f4f4f4"/><rect x="502.2" y="529" width="17" height="16" fill="#494949" /><rect x="508" y="533.2" width="9" height="9" fill="#3f545a" /><rect x="535" y="532" width="8.6" height="9" fill="none" stroke="#2aaeb0" stroke-width="1.4" stroke-dasharray="2 1.3"/><polygon points="541.2,534.4 541.2,543.4 543.2,541.6 544.6,544.4 545.9,543.8 544.6,541.1 547.2,541" fill="#f0f0f0" /><rect x="564.3" y="535.8" width="8.3" height="7.6" fill="#e6e6e6" /><rect x="567.8" y="531.2" width="8.6" height="8.2" fill="#3f3f3f" /><rect x="568.6" y="531.2" width="7.8" height="7.6" fill="#d2d2d2" /><rect x="568.6" y="535" width="4.2" height="3.8" fill="#3a3a3a" /><rect x="569.4" y="535.8" width="2.8" height="2.6" fill="#bdbdbd" /><rect x="583.2" y="535" width="8.4" height="8.4" fill="#c6c6c6" /><path d="M587.4 531.9 H594.7 V539.6" fill="none" stroke="#f0f0f0" stroke-width="1.3"/><rect x="603.02" y="532.02" width="10.35" height="10.35" fill="#3b3b3b" stroke="#e2e2e2" stroke-width="1.25"/><path d="M605.6 534.6 L611 540.4" stroke="#cfcfcf" stroke-width="2.2" stroke-linecap="round"/><rect x="604.2" y="533.2" width="2.6" height="2.6" fill="#f4f4f4" /><circle cx="639.2" cy="537" r="6.2" fill="#d2d2d2"/><circle cx="639.2" cy="537" r="2.1" fill="#555"/><path d="M641.13 537.52 L641.67 542.69" stroke="#5a5a5a" stroke-width="1"/><path d="M639.72 538.93 L635.51 541.98" stroke="#5a5a5a" stroke-width="1"/><path d="M637.79 538.41 L633.04 536.29" stroke="#5a5a5a" stroke-width="1"/><path d="M637.27 536.48 L636.73 531.31" stroke="#5a5a5a" stroke-width="1"/><path d="M638.68 535.07 L642.89 532.02" stroke="#5a5a5a" stroke-width="1"/><path d="M640.61 535.59 L645.36 537.71" stroke="#5a5a5a" stroke-width="1"/><rect x="650" y="529" width="38.2" height="14.6" fill="#2b2b2b" /><text class="fld" x="655.4" y="541.1" textLength="21" lengthAdjust="spacingAndGlyphs">0.00</text><rect x="698.6" y="531.2" width="6.6" height="12" fill="#dedede" /><circle cx="698.6" cy="537.2" r="4.3" fill="#444"/><polygon points="694.8,537.2 698.3,534.1 698.3,540.3" fill="#e4e4e4" /><rect x="711" y="529" width="37.6" height="14.6" fill="#2b2b2b" /><text class="fld" x="717.0" y="541.1" textLength="20.4" lengthAdjust="spacingAndGlyphs">1.00</text><rect x="752" y="527.9" width="18.3" height="17.8" fill="#5191c6" /><circle cx="761.1" cy="536.8" r="6.1" fill="#2bc4c4" stroke="#1c5568" stroke-width="1"/><circle cx="761.1" cy="536.8" r="4.3" fill="none" stroke="#1f6f7a" stroke-width="0.8"/><text x="761.1" y="538.8" text-anchor="middle" font-family='"Liberation Sans", sans-serif' font-weight="bold" font-size="5.2px" fill="#0f3c48">ON</text><rect x="773.5" y="528.4" width="62.5" height="15.9" fill="#5d5d5d" /><text class="fld" x="776.4" y="541.1" style="fill:#e0e0e0" textLength="64.3" lengthAdjust="spacingAndGlyphs">sRGB gamma</text></g></g>
<g clip-path="url(#cTBR)"><text class="menu" x="851" y="522.2" textLength="25.4" lengthAdjust="spacingAndGlyphs">View</text><text class="menu" x="891.2" y="522.2" textLength="42.6" lengthAdjust="spacingAndGlyphs">Shading</text><text class="menu" x="949.2" y="522.2" textLength="42.6" lengthAdjust="spacingAndGlyphs">Lighting</text><text class="menu" x="1007.2" y="522.2" textLength="29" lengthAdjust="spacingAndGlyphs">Show</text><text class="menu" x="1050.9" y="522.2" textLength="47.2" lengthAdjust="spacingAndGlyphs">Renderer</text><text class="menu" x="1113" y="522.2" textLength="32.8" lengthAdjust="spacingAndGlyphs">Panels</text><g transform="translate(842,0)"><ellipse cx="5.4" cy="536.8" rx="1.25" ry="8" fill="#878787"/><ellipse cx="5.4" cy="536.8" rx="0.6" ry="5" fill="#a8a8a8"/><ellipse cx="149.4" cy="536.8" rx="1.25" ry="8" fill="#878787"/><ellipse cx="149.4" cy="536.8" rx="0.6" ry="5" fill="#a8a8a8"/><ellipse cx="293" cy="536.8" rx="1.25" ry="8" fill="#878787"/><ellipse cx="293" cy="536.8" rx="0.6" ry="5" fill="#a8a8a8"/><ellipse cx="437.6" cy="536.8" rx="1.25" ry="8" fill="#878787"/><ellipse cx="437.6" cy="536.8" rx="0.6" ry="5" fill="#a8a8a8"/><ellipse cx="524.5" cy="536.8" rx="1.25" ry="8" fill="#878787"/><ellipse cx="524.5" cy="536.8" rx="0.6" ry="5" fill="#a8a8a8"/><ellipse cx="554" cy="536.8" rx="1.25" ry="8" fill="#878787"/><ellipse cx="554" cy="536.8" rx="0.6" ry="5" fill="#a8a8a8"/><ellipse cx="622" cy="536.8" rx="1.25" ry="8" fill="#878787"/><ellipse cx="622" cy="536.8" rx="0.6" ry="5" fill="#a8a8a8"/><rect x="14" y="533.8" width="9.6" height="6.9" fill="#d6d6d6" /><polygon points="28.3,531.6 28.3,542.4 23,537.1" fill="#d6d6d6" /><rect x="33.2" y="532" width="9.2" height="6" fill="#c6c6c6" /><polygon points="47.2,531.4 47.2,541.2 42.6,536.3" fill="#d0d0d0" /><rect x="32.9" y="536.9" width="6.5" height="6.7" fill="#2ec6c9" rx="0.8"/><path d="M34.4 537.2 v-1.2 a1.8 1.8 0 0 1 3.6 0 v1.2" fill="none" stroke="#2ec6c9" stroke-width="1.3"/><rect x="35.3" y="539.2" width="1.7" height="2.4" fill="#1d5a66" /><rect x="52.2" y="532" width="9.2" height="5.2" fill="#c6c6c6" /><polygon points="66.2,531.4 66.2,541.2 61.6,536.3" fill="#d0d0d0" /><circle cx="56.1" cy="539.4" r="3.1" fill="#4a2444" stroke="#2fbcb9" stroke-width="2"/><polygon points="74.8,531 81.2,531 81.2,543.6 78,540.4 74.8,543.6" fill="#dcdcdc" /><polygon points="95,542.6 100.9,530.6 101.6,538.6 98,542.6" fill="#36b8d8" /><path d="M90.6 542.8 L94.4 535.2" stroke="#e6e6e6" stroke-width="1.3"/><path d="M90.4 542.6 h6 M99.6 540.2 h4.8 M98.4 542.6 h4.8" stroke="#e6e6e6" stroke-width="1.2"/><path d="M93.2 542.6 L96.6 535.6" stroke="#303030" stroke-width="1"/><path d="M110 536 h6.5 M114.6 532 v5.6" stroke="#f0f0f0" stroke-width="1.3" fill="none"/><polygon points="108.2,536 111.2,533.6 111.2,538.4" fill="#f0f0f0" /><polygon points="114.6,530.3 112.4,533.1 116.8,533.1" fill="#f0f0f0" /><circle cx="119.9" cy="538.3" r="3.1" fill="none" stroke="#2ec6c9" stroke-width="1.8"/><path d="M117.6 540.8 L114.6 543.6" stroke="#2ec6c9" stroke-width="2"/><path d="M131 541.4 L139.8 532.2" stroke="#e4e4e4" stroke-width="2.4" stroke-linecap="round"/><circle cx="130.2" cy="542.2" r="1.6" fill="#2ec6c9"/><path d="M136 541.3 a1.9 1.9 0 1 0 3.4 -1.4" fill="none" stroke="#b4b4b4" stroke-width="1.3"/><rect x="155.8" y="527.9" width="19" height="17.8" fill="#5191c6" /><rect x="158.8" y="530.7" width="12.3" height="12.5" fill="#1f3a4d" /><rect x="159.6" y="531.5" width="10.8" height="11" fill="#f2f2f2" /><rect x="160.95" y="532.95" width="1.9" height="1.9" fill="#20140f" /><rect x="160.95" y="536.05" width="1.9" height="1.9" fill="#20140f" /><rect x="160.95" y="539.15" width="1.9" height="1.9" fill="#20140f" /><rect x="164.1" y="532.95" width="1.9" height="1.9" fill="#20140f" /><rect x="164.1" y="536.05" width="1.9" height="1.9" fill="#20140f" /><rect x="164.1" y="539.15" width="1.9" height="1.9" fill="#20140f" /><rect x="167.25" y="532.95" width="1.9" height="1.9" fill="#20140f" /><rect x="167.25" y="536.05" width="1.9" height="1.9" fill="#20140f" /><rect x="167.25" y="539.15" width="1.9" height="1.9" fill="#20140f" /><rect x="177.6" y="531.6" width="12.8" height="10.8" fill="#3b3b3b" stroke="#e2e2e2" stroke-width="1.2"/><path d="M177.6 533.7 h12.8 M177.6 540.3 h12.8" stroke="#e2e2e2" stroke-width="1"/><path d="M183.6 531.6 v2 M183.6 540.6 v2" stroke="#3b3b3b" stroke-width="0.9"/><rect x="196.6" y="531.6" width="12.8" height="10.8" fill="#3b3b3b" stroke="#e2e2e2" stroke-width="1.2"/><circle cx="203" cy="537" r="3.2" fill="url(#gCyR)"/><rect x="214.2" y="529" width="14.8" height="16" fill="#4d4d4d" /><circle cx="221.6" cy="537" r="3.6" fill="#414141"/><rect x="234.6" y="531.6" width="12.8" height="10.8" fill="#3b3b3b" stroke="#e2e2e2" stroke-width="1.2"/><path d="M235.6 537 h11" stroke="#2ec6c9" stroke-width="1.4" stroke-dasharray="1.4 0.9"/><path d="M241 532.6 v9" stroke="#2ec6c9" stroke-width="1.4" stroke-dasharray="1.2 1.2"/><rect x="253.6" y="531.6" width="12.8" height="10.8" fill="#3b3b3b" stroke="#e2e2e2" stroke-width="1.2"/><circle cx="262.2" cy="535.4" r="2.5" fill="#2ec6c9"/><polygon points="255.4,541.6 259.2,536.4 263.2,541.6" fill="#2ec6c9" /><rect x="272.6" y="531.6" width="12.8" height="10.8" fill="#3b3b3b" stroke="#e2e2e2" stroke-width="1.2"/><rect x="275.4" y="533.4" width="7.4" height="1.8" fill="#2ec6c9" /><rect x="278.2" y="535" width="1.8" height="6.2" fill="#2ec6c9" /><rect x="277.2" y="540.4" width="3.8" height="1" fill="#2ec6c9" /><polygon points="309.5,530.6 315.55,533.85 315.55,540.35 309.5,543.6 303.45,540.35 303.45,533.85" fill="none" stroke="#e6e6e6" stroke-width="1.2" stroke-linejoin="round"/><path d="M309.5 543.8 V537.2 L303.45 533.85 M309.5 537.2 L315.55 533.85" stroke="#e6e6e6" stroke-width="1.1" fill="none"/><path d="M309.5 530.6 v6 L303.45 540.35 M309.5 536.4 L315.55 540.35" stroke="#8a8a8a" stroke-width="0.7" fill="none"/><rect x="319" y="527.9" width="18.9" height="17.8" fill="#5191c6" /><polygon points="328.4,530.1 334.82,533.55 328.4,537 321.98,533.55" fill="#66e2ea" /><polygon points="321.98,533.55 328.4,537 328.4,543.9 321.98,540.45" fill="#2bbfc8" /><polygon points="328.4,537 334.82,533.55 334.82,540.45 328.4,543.9" fill="#38cbd3" /><polygon points="328.4,530.1 334.82,533.55 334.82,540.45 328.4,543.9 321.98,540.45 321.98,533.55" fill="none" stroke="#1d4d66" stroke-width="1.1" stroke-linejoin="round"/><path d="M328.4 537 V543.9 M328.4 537 L321.98 533.55 M328.4 537 L334.82 533.55" stroke="#1d4d66" stroke-width="1" fill="none"/><g clip-path="url(#ckAR)"><rect x="341" y="530.9" width="12.4" height="12.4" fill="#f0f0f0" /><rect x="340.7" y="530.7" width="2.15" height="2.15" fill="#1c1c1c" /><rect x="340.7" y="535" width="2.15" height="2.15" fill="#1c1c1c" /><rect x="340.7" y="539.3" width="2.15" height="2.15" fill="#1c1c1c" /><rect x="340.7" y="543.6" width="2.15" height="2.15" fill="#1c1c1c" /><rect x="342.85" y="532.85" width="2.15" height="2.15" fill="#1c1c1c" /><rect x="342.85" y="537.15" width="2.15" height="2.15" fill="#1c1c1c" /><rect x="342.85" y="541.45" width="2.15" height="2.15" fill="#1c1c1c" /><rect x="345" y="530.7" width="2.15" height="2.15" fill="#1c1c1c" /><rect x="345" y="535" width="2.15" height="2.15" fill="#1c1c1c" /><rect x="345" y="539.3" width="2.15" height="2.15" fill="#1c1c1c" /><rect x="345" y="543.6" width="2.15" height="2.15" fill="#1c1c1c" /><rect x="347.15" y="532.85" width="2.15" height="2.15" fill="#1c1c1c" /><rect x="347.15" y="537.15" width="2.15" height="2.15" fill="#1c1c1c" /><rect x="347.15" y="541.45" width="2.15" height="2.15" fill="#1c1c1c" /><rect x="349.3" y="530.7" width="2.15" height="2.15" fill="#1c1c1c" /><rect x="349.3" y="535" width="2.15" height="2.15" fill="#1c1c1c" /><rect x="349.3" y="539.3" width="2.15" height="2.15" fill="#1c1c1c" /><rect x="349.3" y="543.6" width="2.15" height="2.15" fill="#1c1c1c" /><rect x="351.45" y="532.85" width="2.15" height="2.15" fill="#1c1c1c" /><rect x="351.45" y="537.15" width="2.15" height="2.15" fill="#1c1c1c" /><rect x="351.45" y="541.45" width="2.15" height="2.15" fill="#1c1c1c" /><rect x="353.6" y="530.7" width="2.15" height="2.15" fill="#1c1c1c" /><rect x="353.6" y="535" width="2.15" height="2.15" fill="#1c1c1c" /><rect x="353.6" y="539.3" width="2.15" height="2.15" fill="#1c1c1c" /><rect x="353.6" y="543.6" width="2.15" height="2.15" fill="#1c1c1c" /><path d="M346.8 529.9 V544.3 H340 V529.9 z" fill="#dcdcdc"/><path d="M344.6 532.3 a2.6 4.8 0 0 0 0 9.6" fill="none" stroke="#b0b0b0" stroke-width="1.4"/></g><polygon points="366.6,530.4 372.74,533.7 372.74,540.3 366.6,543.6 360.46,540.3 360.46,533.7" fill="#30c4cc" /><polygon points="366.6,530.4 372.74,533.7 366.6,537 360.46,533.7" fill="#3ccfd6" /><polygon points="366.6,530.4 372.74,533.7 372.74,540.3 366.6,543.6 360.46,540.3 360.46,533.7" fill="none" stroke="#ecdfe6" stroke-width="1.3" stroke-linejoin="round"/><path d="M366.6 537 V543.6 M366.6 537 L360.46 533.7 M366.6 537 L372.74 533.7" stroke="#f0e6ea" stroke-width="1.3" fill="none"/><g clip-path="url(#ckBR)"><rect x="379.2" y="530.7" width="12.8" height="12.8" fill="#f0f0f0" /><rect x="378.9" y="530.5" width="2.15" height="2.15" fill="#1c1c1c" /><rect x="378.9" y="534.8" width="2.15" height="2.15" fill="#1c1c1c" /><rect x="378.9" y="539.1" width="2.15" height="2.15" fill="#1c1c1c" /><rect x="378.9" y="543.4" width="2.15" height="2.15" fill="#1c1c1c" /><rect x="381.05" y="532.65" width="2.15" height="2.15" fill="#1c1c1c" /><rect x="381.05" y="536.95" width="2.15" height="2.15" fill="#1c1c1c" /><rect x="381.05" y="541.25" width="2.15" height="2.15" fill="#1c1c1c" /><rect x="383.2" y="530.5" width="2.15" height="2.15" fill="#1c1c1c" /><rect x="383.2" y="534.8" width="2.15" height="2.15" fill="#1c1c1c" /><rect x="383.2" y="539.1" width="2.15" height="2.15" fill="#1c1c1c" /><rect x="383.2" y="543.4" width="2.15" height="2.15" fill="#1c1c1c" /><rect x="385.35" y="532.65" width="2.15" height="2.15" fill="#1c1c1c" /><rect x="385.35" y="536.95" width="2.15" height="2.15" fill="#1c1c1c" /><rect x="385.35" y="541.25" width="2.15" height="2.15" fill="#1c1c1c" /><rect x="387.5" y="530.5" width="2.15" height="2.15" fill="#1c1c1c" /><rect x="387.5" y="534.8" width="2.15" height="2.15" fill="#1c1c1c" /><rect x="387.5" y="539.1" width="2.15" height="2.15" fill="#1c1c1c" /><rect x="387.5" y="543.4" width="2.15" height="2.15" fill="#1c1c1c" /><rect x="389.65" y="532.65" width="2.15" height="2.15" fill="#1c1c1c" /><rect x="389.65" y="536.95" width="2.15" height="2.15" fill="#1c1c1c" /><rect x="389.65" y="541.25" width="2.15" height="2.15" fill="#1c1c1c" /><rect x="391.8" y="530.5" width="2.15" height="2.15" fill="#1c1c1c" /><rect x="391.8" y="534.8" width="2.15" height="2.15" fill="#1c1c1c" /><rect x="391.8" y="539.1" width="2.15" height="2.15" fill="#1c1c1c" /><rect x="391.8" y="543.4" width="2.15" height="2.15" fill="#1c1c1c" /></g><circle cx="404" cy="536" r="3.4" fill="#cdcdcd"/><rect x="402.6" y="539" width="2.8" height="3" fill="#c4c4c4" /><rect x="403.1" y="542.5" width="1.8" height="1.3" fill="#b0b0b0" /><circle cx="404" cy="530.7" r="1.1" fill="#d8d8d8"/><circle cx="399.5" cy="532.4" r="1.1" fill="#d8d8d8"/><circle cx="408.5" cy="532.4" r="1.1" fill="#d8d8d8"/><path d="M396.8 536.7 h2.2 M409 536.7 h2.2" stroke="#d8d8d8" stroke-width="1.3"/><circle cx="425.8" cy="535.9" r="5.1" fill="url(#gCyR)"/><path d="M416.3 538.8 l3.6 3.8 M417.8 537.4 l3.6 3.8 M419.3 536.2 l3.2 3.4" stroke="#ececec" stroke-width="1.1"/><ellipse cx="453" cy="541.4" rx="7.6" ry="2.5" fill="#22908f"/><path d="M446.5 541 l2 2 M449 540 l3 3.4 M452 539.6 l3.4 3.8 M455.4 539.8 l3 3.2 M458 540.6 l1.8 1.6" stroke="#56d8d6" stroke-width="0.9"/><circle cx="453.2" cy="535.5" r="5" fill="#dadada"/><circle cx="469.6" cy="539" r="4.3" fill="#6c6c6c"/><circle cx="472" cy="537.4" r="4.2" fill="#8a8a8a"/><circle cx="474.9" cy="535.1" r="4.4" fill="#d6d6d6"/><path d="M490.6 532.2 a5.2 5.2 0 0 0 0 10.4" fill="none" stroke="#2ec6c9" stroke-width="2.3"/><circle cx="492.84" cy="532.36" r="1.05" fill="#f4f4f4"/><circle cx="495.49" cy="534.28" r="1.05" fill="#f4f4f4"/><circle cx="496.5" cy="537.4" r="1.05" fill="#f4f4f4"/><circle cx="495.49" cy="540.52" r="1.05" fill="#f4f4f4"/><circle cx="492.84" cy="542.44" r="1.05" fill="#f4f4f4"/><rect x="502.2" y="529" width="17" height="16" fill="#494949" /><rect x="508" y="533.2" width="9" height="9" fill="#3f545a" /><rect x="535" y="532" width="8.6" height="9" fill="none" stroke="#2aaeb0" stroke-width="1.4" stroke-dasharray="2 1.3"/><polygon points="541.2,534.4 541.2,543.4 543.2,541.6 544.6,544.4 545.9,543.8 544.6,541.1 547.2,541" fill="#f0f0f0" /><rect x="564.3" y="535.8" width="8.3" height="7.6" fill="#e6e6e6" /><rect x="567.8" y="531.2" width="8.6" height="8.2" fill="#3f3f3f" /><rect x="568.6" y="531.2" width="7.8" height="7.6" fill="#d2d2d2" /><rect x="568.6" y="535" width="4.2" height="3.8" fill="#3a3a3a" /><rect x="569.4" y="535.8" width="2.8" height="2.6" fill="#bdbdbd" /><rect x="583.2" y="535" width="8.4" height="8.4" fill="#c6c6c6" /><path d="M587.4 531.9 H594.7 V539.6" fill="none" stroke="#f0f0f0" stroke-width="1.3"/><rect x="603.02" y="532.02" width="10.35" height="10.35" fill="#3b3b3b" stroke="#e2e2e2" stroke-width="1.25"/><path d="M605.6 534.6 L611 540.4" stroke="#cfcfcf" stroke-width="2.2" stroke-linecap="round"/><rect x="604.2" y="533.2" width="2.6" height="2.6" fill="#f4f4f4" /><circle cx="639.2" cy="537" r="6.2" fill="#d2d2d2"/><circle cx="639.2" cy="537" r="2.1" fill="#555"/><path d="M641.13 537.52 L641.67 542.69" stroke="#5a5a5a" stroke-width="1"/><path d="M639.72 538.93 L635.51 541.98" stroke="#5a5a5a" stroke-width="1"/><path d="M637.79 538.41 L633.04 536.29" stroke="#5a5a5a" stroke-width="1"/><path d="M637.27 536.48 L636.73 531.31" stroke="#5a5a5a" stroke-width="1"/><path d="M638.68 535.07 L642.89 532.02" stroke="#5a5a5a" stroke-width="1"/><path d="M640.61 535.59 L645.36 537.71" stroke="#5a5a5a" stroke-width="1"/><rect x="650" y="529" width="38.2" height="14.6" fill="#2b2b2b" /><text class="fld" x="655.4" y="541.1" textLength="21" lengthAdjust="spacingAndGlyphs">0.00</text><rect x="698.6" y="531.2" width="6.6" height="12" fill="#dedede" /><circle cx="698.6" cy="537.2" r="4.3" fill="#444"/><polygon points="694.8,537.2 698.3,534.1 698.3,540.3" fill="#e4e4e4" /><rect x="711" y="529" width="37.6" height="14.6" fill="#2b2b2b" /><text class="fld" x="717.0" y="541.1" textLength="20.4" lengthAdjust="spacingAndGlyphs">1.00</text><rect x="752" y="527.9" width="18.3" height="17.8" fill="#5191c6" /><circle cx="761.1" cy="536.8" r="6.1" fill="#2bc4c4" stroke="#1c5568" stroke-width="1"/><circle cx="761.1" cy="536.8" r="4.3" fill="none" stroke="#1f6f7a" stroke-width="0.8"/><text x="761.1" y="538.8" text-anchor="middle" font-family='"Liberation Sans", sans-serif' font-weight="bold" font-size="5.2px" fill="#0f3c48">ON</text><rect x="773.5" y="528.4" width="62.5" height="15.9" fill="#5d5d5d" /><text class="fld" x="776.4" y="541.1" style="fill:#e0e0e0" textLength="64.3" lengthAdjust="spacingAndGlyphs">sRGB gamma</text></g></g>
</svg>
</body></html>
